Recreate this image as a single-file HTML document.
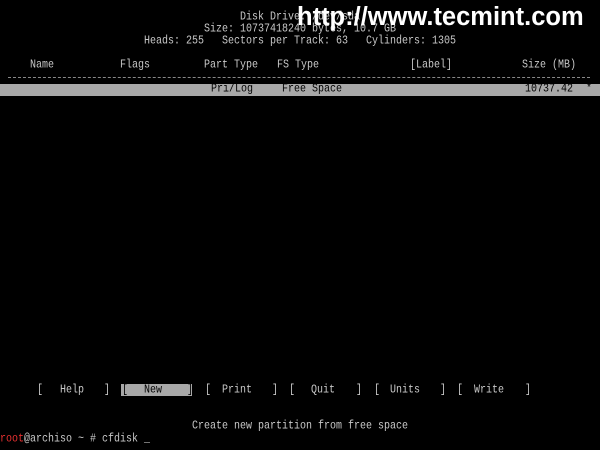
<!DOCTYPE html>
<html><head><style>
body{margin:0;width:600px;height:450px;background:#000;overflow:hidden;position:relative;font-family:"Liberation Mono",monospace;font-size:10px;color:#c8c8c8}
.t{position:absolute;white-space:pre;line-height:12px;transform:scaleY(1.2);transform-origin:left top}
.bar{position:absolute;background:#a8a8a8}
</style></head><body>
<div class="t" style="left:240px;top:11px">Disk Drive: /dev/sda</div>
<div class="t" style="left:204px;top:23px">Size: 10737418240 bytes, 10.7 GB</div>
<div class="t" style="left:144px;top:35px">Heads: 255   Sectors per Track: 63   Cylinders: 1305</div>
<div style="position:absolute;left:297px;top:3px;font-family:'Liberation Sans',sans-serif;font-weight:bold;font-size:25.5px;color:#fff;line-height:28px">http://www.tecmint.com</div>
<div class="t" style="left:30px;top:59px">Name</div>
<div class="t" style="left:120px;top:59px">Flags</div>
<div class="t" style="left:204px;top:59px">Part Type</div>
<div class="t" style="left:277px;top:59px">FS Type</div>
<div class="t" style="left:410px;top:59px">[Label]</div>
<div class="t" style="left:522px;top:59px">Size (MB)</div>
<div style="position:absolute;left:8px;top:77px;width:582px;border-top:1px dashed #888"></div>
<div class="bar" style="left:0;top:84px;width:600px;height:12px"></div>
<div class="t" style="left:211px;top:83px;color:#000">Pri/Log</div>
<div class="t" style="left:282px;top:83px;color:#000">Free Space</div>
<div class="t" style="left:525px;top:83px;color:#000">10737.42</div>
<div class="t" style="left:586px;top:83px;color:#000">*</div>
<div class="bar" style="left:121px;top:384px;width:71px;height:12px"></div>
<div class="t" style="left:37px;top:384px">[</div><div class="t" style="left:60px;top:384px">Help</div><div class="t" style="left:104px;top:384px">]</div>
<div class="t" style="left:122px;top:384px;color:#000">[</div><div class="t" style="left:144px;top:384px;color:#000">New</div><div class="t" style="left:187px;top:384px;color:#000">]</div>
<div class="t" style="left:205px;top:384px">[</div><div class="t" style="left:222px;top:384px">Print</div><div class="t" style="left:272px;top:384px">]</div>
<div class="t" style="left:289px;top:384px">[</div><div class="t" style="left:311px;top:384px">Quit</div><div class="t" style="left:356px;top:384px">]</div>
<div class="t" style="left:374px;top:384px">[</div><div class="t" style="left:390px;top:384px">Units</div><div class="t" style="left:440px;top:384px">]</div>
<div class="t" style="left:457px;top:384px">[</div><div class="t" style="left:474px;top:384px">Write</div><div class="t" style="left:525px;top:384px">]</div>
<div class="t" style="left:192px;top:420px">Create new partition from free space</div>
<div class="t" style="left:0;top:433px"><span style="color:#e83030">root</span>@archiso ~ # cfdisk _</div>
</body></html>
